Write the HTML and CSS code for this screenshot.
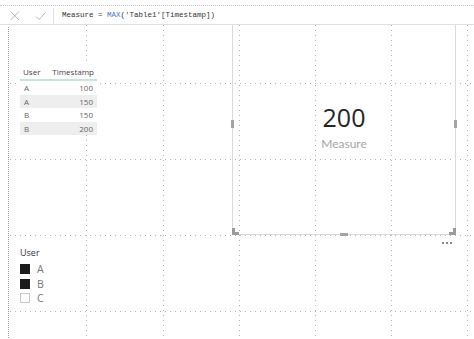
FILE: index.html
```html
<!DOCTYPE html>
<html>
<head>
<meta charset="utf-8">
<link rel="stylesheet" href="styles.css">
</head>
<body>
<div class="app">
  <div class="formula-bar">
    <div class="fx-buttons">
      <svg class="fx-icon" width="12" height="12" viewBox="0 0 12 12"><path d="M1.5 1.5 L10 10 M10 1.5 L1.5 10" stroke="#b8b8b8" stroke-width="1" fill="none"/></svg>
      <svg class="fx-icon" width="12" height="12" viewBox="0 0 12 12"><path d="M1 6.5 L4 9.5 L10.5 2.5" stroke="#b8b8b8" stroke-width="1" fill="none"/></svg>
    </div>
    <div class="formula">Measure = <span class="fn">MAX</span>('Table1'[Timestamp])</div>
  </div>
  <div class="canvas">
    <svg class="grid" width="474" height="314" viewBox="0 0 474 314">
      <g stroke="#b4b4b4" stroke-width="1" stroke-dasharray="1 4">
        <line x1="86.5" y1="0" x2="86.5" y2="314"/>
        <line x1="163.5" y1="0" x2="163.5" y2="314"/>
        <line x1="239.5" y1="0" x2="239.5" y2="314"/>
        <line x1="315.5" y1="0" x2="315.5" y2="314"/>
        <line x1="391.5" y1="0" x2="391.5" y2="314"/>
        <line x1="467.5" y1="0" x2="467.5" y2="314"/>
        <line x1="10" y1="58.5" x2="474" y2="58.5"/>
        <line x1="10" y1="134.5" x2="474" y2="134.5"/>
        <line x1="10" y1="210.5" x2="474" y2="210.5"/>
        <line x1="10" y1="286.5" x2="474" y2="286.5"/>
      </g>
      <line x1="8.5" y1="2" x2="8.5" y2="314" stroke="#9a9a9a" stroke-width="1" stroke-dasharray="1 1"/>
    </svg>

    <div class="visual table-visual">
      <div class="t-row t-head"><span>User</span><span>Timestamp</span></div>
      <div class="t-row"><span>A</span><span>100</span></div>
      <div class="t-row alt"><span>A</span><span>150</span></div>
      <div class="t-row"><span>B</span><span>150</span></div>
      <div class="t-row alt"><span>B</span><span>200</span></div>
    </div>

    <div class="visual card">
      <div class="card-value">200</div>
      <div class="card-label">Measure</div>
      <span class="handle h-left"></span>
      <span class="handle h-right"></span>
      <span class="handle h-bottom"></span>
      <span class="corner c-bl"></span>
      <span class="corner c-br"></span>
    </div>
    <div class="more"><i></i><i></i><i></i></div>

    <div class="visual slicer">
      <div class="slicer-title">User</div>
      <div class="slicer-item"><span class="box on"></span><span>A</span></div>
      <div class="slicer-item"><span class="box on"></span><span>B</span></div>
      <div class="slicer-item"><span class="box"></span><span>C</span></div>
    </div>
  </div>
</div>
</body>
</html>
```
FILE: styles.css
```css
* { box-sizing: border-box; }
html, body { margin: 0; padding: 0; background: #fff; }
body { width: 474px; height: 339px; overflow: hidden; font-family: "Open Sans", "Noto Sans", sans-serif; }
.app { width: 474px; height: 339px; display: flex; flex-direction: column; }

.formula-bar {
  margin-top: 5px;
  height: 20px;
  border-top: 1px dotted #c9c9c9;
  border-bottom: 1px solid #e0e0e0;
  display: flex;
  align-items: stretch;
}
.fx-buttons {
  width: 54px;
  display: flex;
  align-items: center;
  gap: 14px;
  padding-left: 9px;
  border-right: 1px solid #e0e0e0;
  margin-top: 2px;
}
.fx-icon { display: block; }
.formula {
  padding-left: 8px;
  font-family: "Liberation Mono", "DejaVu Sans Mono", monospace;
  font-size: 7.5px;
  color: #333;
  display: flex;
  align-items: center;
  white-space: pre;
}
.fn { color: #3a7bd5; }

.canvas { position: relative; height: 314px; }
.grid { position: absolute; left: 0; top: 0; }

.visual { position: absolute; }

.table-visual {
  left: 20px;
  top: 38px;
  width: 77px;
  background: #fff;
  font-size: 8px;
  color: #666;
}
.t-row {
  display: flex;
  justify-content: space-between;
  align-items: center;
  height: 13.5px;
  padding: 0 4px 0 4px;
}
.t-head {
  height: 18px;
  color: #444;
  border-bottom: 2px solid #c4e4df;
  padding-left: 3px;
  padding-right: 3px;
}
.t-row.alt { background: #eeeeee; }

.card {
  left: 232px;
  top: 0;
  width: 224px;
  height: 210px;
  border: 1px solid #dadada;
  border-top: none;
  display: flex;
  flex-direction: column;
  align-items: center;
  justify-content: center;
  padding-bottom: 5px;
}
.card-value {
  font-family: "Open Sans", "Noto Sans", sans-serif;
  font-size: 25px;
  line-height: 28px;
  color: #252423;
}
.card-label {
  margin-top: 5px;
  font-family: "Lato", "Open Sans", sans-serif;
  font-size: 12px;
  line-height: 16px;
  color: #a6a6a6;
}
.handle { position: absolute; background: #a3a3a3; }
.h-left { left: -2px; top: 95px; width: 3px; height: 8px; }
.h-right { right: -2px; top: 95px; width: 3px; height: 8px; }
.h-bottom { left: 107px; bottom: -2px; width: 8px; height: 3px; }
.corner { position: absolute; width: 7px; height: 7px; border-color: #9a9a9a; border-style: solid; }
.c-bl { left: -1px; bottom: -1px; border-width: 0 0 3px 3px; }
.c-br { right: -1px; bottom: -1px; border-width: 0 3px 3px 0; }

.more {
  position: absolute;
  left: 442px;
  top: 217px;
  display: flex;
  gap: 2px;
}
.more i { display: block; width: 2px; height: 2px; background: #888; }

.slicer {
  left: 20px;
  top: 222px;
  width: 60px;
}
.slicer-title {
  font-size: 9px;
  line-height: 12px;
  color: #333;
  margin-bottom: 3px;
}
.slicer-item {
  height: 14.5px;
  display: flex;
  align-items: center;
  gap: 7px;
  font-size: 10.5px;
  color: #777;
}
.box { width: 10px; height: 10px; border: 1.5px solid #c6c6c6; background: #fff; }
.box.on { background: #1b1b1b; border-color: #1b1b1b; }
```
